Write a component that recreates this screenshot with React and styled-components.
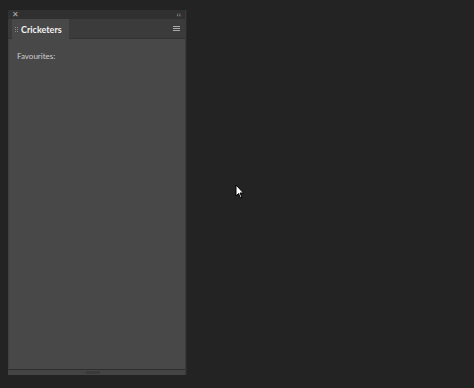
import React from "react";
import styled, { createGlobalStyle } from "styled-components";

const Global = createGlobalStyle`
  html, body { margin: 0; padding: 0; background: #232323; }
  body { width: 474px; height: 388px; overflow: hidden; font-family: Lato, "Open Sans", "Liberation Sans", sans-serif; }
`;

const Stage = styled.div`
  position: relative;
  width: 474px;
  height: 388px;
  padding: 10px 0 0 8px;
  box-sizing: border-box;
`;

const Panel = styled.div`
  width: 177px;
  height: 365px;
  display: flex;
  flex-direction: column;
  background: #484848;
  border-right: 1px solid #3a3a3a;
  box-shadow: 1px 0 0 #2a2a2a;
`;

const TitleBar = styled.div`
  height: 9px;
  background: #303030;
  display: flex;
  align-items: center;
  justify-content: space-between;
  padding: 0 4px 0 4px;
  color: #b0b0b0;
  font-size: 8px;
  line-height: 9px;
`;

const TabRow = styled.div`
  height: 19px;
  display: flex;
  align-items: stretch;
  background: #3b3b3b;
  border-bottom: 1px solid #333;
  padding-left: 4px;
`;

const Tab = styled.div`
  width: 57px;
  display: flex;
  align-items: center;
  gap: 3px;
  background: #484848;
  margin-bottom: -1px;
  padding-left: 3px;
  box-sizing: border-box;
`;

const Grip = styled.span`
  width: 3px;
  height: 5px;
  border-left: 1px dotted #888;
  border-right: 1px dotted #888;
  box-sizing: border-box;
`;

const TabLabel = styled.span`
  color: #f2f2f2;
  font-weight: 700;
  font-size: 9px;
`;

const Spacer = styled.div`
  flex: 1;
`;

const MenuBtn = styled.div`
  width: 7px;
  margin-right: 5px;
  display: flex;
  flex-direction: column;
  justify-content: center;
  gap: 1px;
  span {
    display: block;
    height: 1px;
    background: #aaa;
  }
`;

const Content = styled.div`
  flex: 1;
  padding: 12px 8px;
  border-left: 1px solid #404040;
`;

const Label = styled.div`
  color: #cfcfcf;
  font-size: 8px;
`;

const Footer = styled.div`
  height: 5px;
  border-top: 1px solid #2e2e2e;
  background: #444;
  display: flex;
  justify-content: center;
  align-items: center;
`;

const FooterGrip = styled.div`
  width: 14px;
  height: 3px;
  background: #3a3a3a;
  margin-left: -8px;
`;

const Cursor = styled.svg`
  position: absolute;
  left: 235px;
  top: 184px;
`;

export default function App() {
  return (
    <>
      <Global />
      <Stage>
        <Panel>
          <TitleBar>
            <span>✕</span>
            <span>‹‹</span>
          </TitleBar>
          <TabRow>
            <Tab>
              <Grip />
              <TabLabel>Cricketers</TabLabel>
            </Tab>
            <Spacer />
            <MenuBtn>
              <span />
              <span />
              <span />
            </MenuBtn>
          </TabRow>
          <Content>
            <Label>Favourites:</Label>
          </Content>
          <Footer>
            <FooterGrip />
          </Footer>
        </Panel>
        <Cursor width="11" height="15" viewBox="0 0 11 15">
          <path d="M1 1 L1 12 L3.5 9.5 L5.5 14 L7 13.3 L5 9 L8.5 9 Z" fill="#fff" stroke="#000" strokeWidth="1" strokeLinejoin="round" />
        </Cursor>
      </Stage>
    </>
  );
}
